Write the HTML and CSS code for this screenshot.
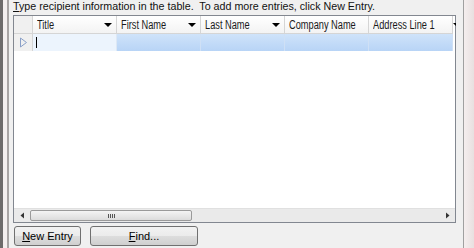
FILE: index.html
```html
<!DOCTYPE html>
<html>
<head>
<meta charset="utf-8">
<link rel="stylesheet" href="styles.css">
</head>
<body>
<div class="frame">
  <div class="edge-left"><div class="e1"></div><div class="e2"></div><div class="e3"></div><div class="e4"></div></div>
  <div class="main">
    <div class="hint"><span class="u">T</span>ype recipient information in the table.&nbsp; To add more entries, click New Entry.</div>
    <div class="list">
      <div class="grid">
        <div class="hrow">
          <div class="corner"></div>
          <div class="hcell"><span class="lbl">Title</span><i class="arr"></i></div>
          <div class="hcell"><span class="lbl">First Name</span><i class="arr"></i></div>
          <div class="hcell"><span class="lbl">Last Name</span><i class="arr"></i></div>
          <div class="hcell"><span class="lbl">Company Name</span><i class="arr"></i></div>
          <div class="hcell"><span class="lbl">Address Line 1</span><i class="arr"></i></div>
        </div>
        <div class="drow">
          <div class="rhead"><svg width="9" height="11" viewBox="0 0 9 11"><path d="M1.5 1 L7.5 5.5 L1.5 10 Z" fill="none" stroke="#8aa0c8" stroke-width="1"/></svg></div>
          <div class="dcell first"><span class="caret"></span></div>
          <div class="dcell sel"></div>
          <div class="dcell sel"></div>
          <div class="dcell sel"></div>
          <div class="dcell sel"></div>
        </div>
      </div>
      <div class="hscroll">
        <div class="sbtn"><svg width="5" height="7" viewBox="0 0 5 7"><path d="M4 0.5 L0.5 3.5 L4 6.5 Z" fill="#333"/></svg></div>
        <div class="track">
          <div class="thumb"><span class="grip"></span></div>
        </div>
        <div class="sbtn"><svg width="5" height="7" viewBox="0 0 5 7"><path d="M1 0.5 L4.5 3.5 L1 6.5 Z" fill="#333"/></svg></div>
      </div>
    </div>
    <div class="buttons">
      <button class="btn b1"><span class="u">N</span>ew Entry</button>
      <button class="btn b2"><span class="u">F</span>ind...</button>
    </div>
  </div>
  <div class="edge-right"><div class="r1"></div><div class="r2"></div><div class="r3"></div></div>
</div>
</body>
</html>
```
FILE: styles.css
```css
html, body { margin: 0; padding: 0; }
body {
  width: 474px; height: 248px; overflow: hidden;
  background: #f0f0f0;
  font-family: "Liberation Sans", Arial, sans-serif;
  font-size: 11px;
  color: #000;
}
.frame { display: flex; height: 248px; }
.edge-left { display: flex; width: 13px; flex: none; }
.e1 { width: 3px; background: #6e6a6a; }
.e2 { width: 4px; background: #f4eeee; }
.e3 { width: 2px; background: #a9a4a4; }
.e4 { width: 4px; background: #f0f0f0; }
.main { width: 443px; flex: none; display: flex; flex-direction: column; }
.hint { height: 15px; line-height: 13px; font-size: 10.7px; white-space: nowrap; color: #111; }
.u { text-decoration: underline; }
.list {
  height: 208px; box-sizing: border-box;
  border: 1px solid #828790; background: #fff;
  display: flex; flex-direction: column;
}
.grid { flex: 1; }
.hrow { display: flex; height: 18px; }
.corner { width: 19px; box-sizing: border-box; background: #f0f0f0; border-right: 1px solid #d5d5d5; border-bottom: 1px solid #d5d5d5; }
.hcell {
  width: 84px; box-sizing: border-box; display: flex; align-items: center;
  justify-content: space-between; padding: 0 4px 0 4px;
  background: linear-gradient(#ffffff, #f3f3f3);
  border-right: 1px solid #d5d5d5; border-bottom: 1px solid #d5d5d5;
  font-size: 12px; white-space: nowrap; color: #1a1a1a;
}
.lbl { display: inline-block; transform: scaleX(0.77); transform-origin: left center; }
.arr { width: 0; height: 0; border-left: 4px solid transparent; border-right: 4px solid transparent; border-top: 4px solid #000; }
.drow { display: flex; height: 17px; }
.rhead { width: 19px; box-sizing: border-box; background: #f0f0f0; border-right: 1px solid #d5d5d5; display: flex; align-items: center; justify-content: center; }
.dcell { width: 84px; box-sizing: border-box; }
.dcell.first { background: #ecf4fd; display: flex; align-items: center; padding-left: 3px; border-right: 1px solid #dde8f5; }
.caret { width: 1px; height: 11px; background: #000; }
.dcell.sel { background: linear-gradient(#cfe3fa, #b8d4f6); border-right: 1px solid #cfe0f5; }
.hscroll { height: 13px; display: flex; background: #eaeaea; border-top: 1px solid #e0e0e0; }
.sbtn { width: 16px; display: flex; align-items: center; justify-content: center; }
.track { flex: 1; display: flex; }
.thumb {
  width: 162px; box-sizing: border-box; margin: 1px 0;
  border: 1px solid #9a9a9a; border-radius: 2px;
  background: linear-gradient(#f4f4f4, #dcdcdc);
  display: flex; align-items: center; justify-content: center;
}
.grip { width: 7px; height: 4px; background: repeating-linear-gradient(90deg, #555 0 1px, transparent 1px 2px); }
.buttons { display: flex; gap: 9px; padding: 3px 0 0 1px; }
.btn {
  height: 20px; box-sizing: border-box;
  border: 1px solid #707070; border-radius: 3px;
  background: linear-gradient(#f2f2f2 0%, #ebebeb 50%, #dddddd 51%, #cfcfcf 100%);
  font-family: "Liberation Sans", sans-serif; font-size: 11px; color: #000; padding: 0;
}
.b1 { width: 67px; }
.b2 { width: 108px; }
.edge-right { display: flex; width: 18px; flex: none; }
.r1 { width: 7px; background: #f0f0f0; }
.r2 { width: 1px; background: #a0a0a0; }
.r3 { width: 10px; background: linear-gradient(90deg, #f5eeee, #e8e0e0); }
```
